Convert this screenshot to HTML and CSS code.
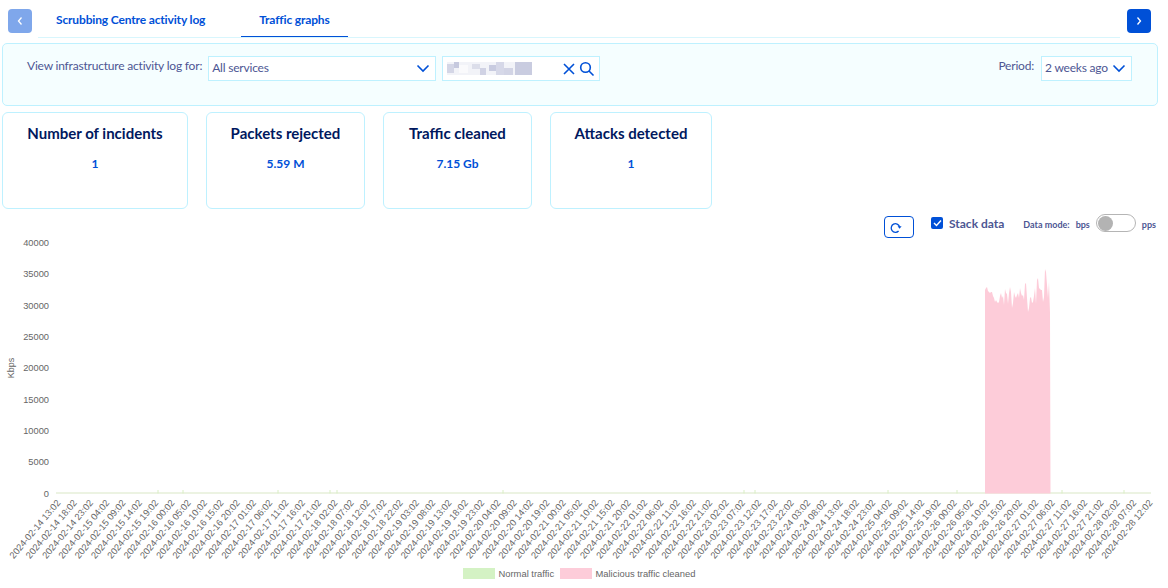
FILE: index.html
```html
<!DOCTYPE html>
<html lang="en">
<head>
  <meta charset="UTF-8">
  <title>Traffic graphs</title>
  <link rel="stylesheet" href="styles.css">
</head>
<body>
  <div class="tabs">
    <button class="nav-btn disabled">
      <svg width="8" height="10" viewBox="0 0 8 10"><path d="M5.5 1.5 2.5 5l3 3.5"/></svg>
    </button>
    <div class="tab-list">
      <a class="tab">Scrubbing Centre activity log</a>
      <a class="tab active">Traffic graphs</a>
    </div>
    <button class="nav-btn">
      <svg width="8" height="10" viewBox="0 0 8 10"><path d="M2.5 1.5 5.5 5l-3 3.5"/></svg>
    </button>
  </div>

  <div class="filters">
    <label class="filter-label">View infrastructure activity log for:</label>
    <div class="select select-service">
      <span>All services</span>
      <svg class="chevron" width="14" height="9" viewBox="0 0 14 9"><path d="M1.5 1.5 7 7l5.5-5.5"/></svg>
    </div>
    <div class="search">
      <svg class="blur" width="85" height="13" viewBox="0 0 85 13" shape-rendering="crispEdges">
        <rect x="0" y="0" width="85" height="13" fill="#f2f3f8"/>
        <rect x="0" y="2" width="7" height="9" fill="#d4d6e6"/>
        <rect x="7" y="0" width="5" height="6" fill="#c6c9de"/>
        <rect x="12" y="3" width="9" height="8" fill="#fafafc"/>
        <rect x="25" y="2" width="8" height="5" fill="#dcdeea"/>
        <rect x="33" y="6" width="6" height="7" fill="#d0d2e4"/>
        <rect x="42" y="3" width="7" height="6" fill="#c8cbe0"/>
        <rect x="49" y="0" width="8" height="13" fill="#d6d8e8"/>
        <rect x="57" y="6" width="9" height="7" fill="#d2d4e5"/>
        <rect x="68" y="0" width="17" height="13" fill="#c9cce0"/>
      </svg>
      <svg class="clear" width="14" height="14" viewBox="0 0 14 14"><path d="M2 2l10 10M12 2 2 12"/></svg>
      <svg class="magnifier" width="16" height="16" viewBox="0 0 16 16"><circle cx="6.5" cy="6.5" r="4.8"/><path d="M10 10l4.5 4.5"/></svg>
    </div>
    <div class="period">
      <label class="filter-label">Period:</label>
      <div class="select select-period">
        <span>2 weeks ago</span>
        <svg class="chevron" width="14" height="9" viewBox="0 0 14 9"><path d="M1.5 1.5 7 7l5.5-5.5"/></svg>
      </div>
    </div>
  </div>

  <div class="cards">
    <div class="card card-incidents"><h3>Number of incidents</h3><p>1</p></div>
    <div class="card card-packets"><h3>Packets rejected</h3><p>5.59 M</p></div>
    <div class="card card-traffic"><h3>Traffic cleaned</h3><p>7.15 Gb</p></div>
    <div class="card card-attacks"><h3>Attacks detected</h3><p>1</p></div>
  </div>

  <div class="graph-tools">
    <button class="refresh">
      <svg width="12" height="12" viewBox="0 0 12 12"><path d="M8.6 9A4.3 4.3 0 1 1 9.6 4.7"/><path class="fill" d="M7.6 4.2h4L9.6 6.8z"/></svg>
    </button>
    <span class="checkbox">
      <svg width="9" height="8" viewBox="0 0 9 8"><path d="M1 4l2.5 2.5L8 1.5"/></svg>
    </span>
    <span class="stack-label">Stack data</span>
    <span class="mode-label">Data mode:</span>
    <span class="mode-unit">bps</span>
    <span class="toggle"><span class="knob"></span></span>
    <span class="mode-unit">pps</span>
  </div>

  <svg id="graph" class="graph" width="1168" height="350" viewBox="0 238 1168 350"></svg>

  <script src="graph.js"></script>
</body>
</html>
```

FILE: styles.css
```css
body {
  margin: 0;
  width: 1168px;
  height: 588px;
  overflow: hidden;
  background-color: #fff;
  font-family: Lato, "Noto Sans", Arial, sans-serif;
  letter-spacing: -0.2px;
  color: #4d5693;
}
button {
  font-family: inherit;
  padding: 0;
  cursor: pointer;
}

/* tabs */
.tabs {
  display: flex;
  align-items: flex-start;
  height: 43px;
  padding: 9px 17px 0 8px;
  box-sizing: border-box;
}
.nav-btn {
  flex: none;
  width: 24px;
  height: 24px;
  border: none;
  border-radius: 4px;
  background-color: #0050d7;
  display: flex;
  align-items: center;
  justify-content: center;
}
.nav-btn svg path {
  fill: none;
  stroke: #fff;
  stroke-width: 1.3;
}
.nav-btn.disabled {
  background-color: #7fa7eb;
}
.tab-list {
  flex: 1;
  display: flex;
  height: 28px;
  margin: 0 7px 0 6px;
  border-bottom: 1px solid #d8f6fd;
}
.tab {
  height: 27px;
  padding: 0 18px;
  font-size: 12px;
  font-weight: 700;
  line-height: 22px;
  letter-spacing: -0.15px;
  color: #0050d7;
  white-space: nowrap;
}
.tab + .tab {
  margin-left: 18px;
}
.tab.active {
  border-bottom: 1px solid #0050d7;
}

/* filters */
.filters {
  display: flex;
  align-items: flex-start;
  height: 63px;
  margin: 0 10px 0 2px;
  padding: 12px 24px 0 24px;
  box-sizing: border-box;
  background-color: #f5feff;
  border: 1px solid #bef1ff;
  border-radius: 5px;
}
.filter-label {
  padding-top: 1px;
  font-size: 12px;
  line-height: 18px;
  white-space: nowrap;
}
.select {
  display: flex;
  align-items: center;
  justify-content: space-between;
  box-sizing: border-box;
  height: 25px;
  padding: 0 5px 0 3px;
  background-color: #fff;
  border: 1px solid #bef1ff;
  font-size: 12px;
  white-space: nowrap;
}
.select span {
  margin-top: -2px;
}
.select-service {
  width: 228px;
  margin-left: 6px;
}
.select-period {
  width: 91px;
  margin-left: 7px;
}
.chevron path {
  fill: none;
  stroke: #0050d7;
  stroke-width: 1.6;
}
.search {
  display: flex;
  align-items: center;
  box-sizing: border-box;
  width: 158px;
  height: 25px;
  margin-left: 6px;
  padding: 0 4px;
  background-color: #fff;
  border: 1px solid #bef1ff;
}
.blur {
  margin-right: auto;
}
.clear path {
  fill: none;
  stroke: #0050d7;
  stroke-width: 1.6;
}
.magnifier {
  margin-left: 3px;
}
.magnifier circle,
.magnifier path {
  fill: none;
  stroke: #0050d7;
  stroke-width: 1.6;
}
.period {
  display: flex;
  margin-left: auto;
  padding-right: 1px;
}

/* cards */
.cards {
  display: flex;
  gap: 18px;
  margin: 6px 0 0 2px;
}
.card {
  box-sizing: border-box;
  height: 97px;
  border: 1px solid #bef1ff;
  border-radius: 6px;
  text-align: center;
}
.card-incidents { width: 186px; }
.card-packets { width: 159px; }
.card-traffic { width: 149px; }
.card-attacks { width: 162px; }
.card h3 {
  margin: 10px 0 0;
  font-size: 15px;
  font-weight: 700;
  line-height: 20px;
  letter-spacing: 0;
  color: #00185e;
}
.card p {
  margin: 12px 0 0;
  font-size: 12px;
  font-weight: 700;
  line-height: 18px;
  letter-spacing: 0;
  color: #0050d7;
}

/* graph tools */
.graph-tools {
  display: flex;
  align-items: center;
  height: 22px;
  margin-top: 7px;
  padding-left: 884px;
}
.refresh {
  width: 30px;
  height: 22px;
  background-color: #fff;
  border: 1px solid #0050d7;
  border-radius: 4px;
  display: flex;
  align-items: center;
  justify-content: center;
}
.refresh svg {
  margin: 2px 7px 0 0;
}
.refresh path {
  fill: none;
  stroke: #0050d7;
  stroke-width: 1.3;
}
.refresh path.fill {
  fill: #0050d7;
  stroke: none;
}
.checkbox {
  width: 12px;
  height: 12px;
  margin: -8px 0 0 17px;
  border-radius: 2px;
  background-color: #0050d7;
  display: flex;
  align-items: center;
  justify-content: center;
}
.checkbox path {
  fill: none;
  stroke: #fff;
  stroke-width: 1.4;
}
.stack-label {
  margin: -8px 0 0 6px;
  font-size: 12px;
  font-weight: 700;
  letter-spacing: 0;
}
.mode-label {
  margin: -6px 0 0 19px;
  font-size: 9px;
  font-weight: 700;
  letter-spacing: 0;
}
.mode-unit {
  margin: -6px 0 0 6px;
  font-size: 9px;
  font-weight: 700;
  letter-spacing: 0;
}
.toggle {
  width: 38px;
  height: 16px;
  margin: -8px 0 0 6px;
  border: 1px solid #b5b5b5;
  border-radius: 9px;
  background-color: #fff;
  display: flex;
  align-items: center;
}
.knob {
  width: 15px;
  height: 15px;
  margin-left: 1px;
  border-radius: 50%;
  background-color: #b3b3b3;
}

/* graph */
.graph {
  display: block;
}
.graph text {
  font-family: "Liberation Sans", Arial, sans-serif;
  font-size: 9.3px;
  letter-spacing: 0;
  fill: #666;
}
.graph .y-label {
  font-size: 9px;
}
.graph .legend-label {
  font-size: 9.4px;
}
.normal-line {
  fill: none;
  stroke: #e6efd8;
  stroke-width: 1.5;
}
.normal-spike {
  stroke: #d9eec4;
  stroke-width: 1;
}
.cleaned-area {
  fill: #fdccd9;
}
.swatch-normal {
  fill: #d4f2c4;
}
.swatch-cleaned {
  fill: #fdccd9;
}
```

FILE: graph.js
```js
const SVG_NS = 'http://www.w3.org/2000/svg';
const graph = document.querySelector('#graph');

const X_LEFT = 56;
const X_RIGHT = 1151;
const Y_ZERO = 493.5;
const Y_TOP = 243;
const TICK_COUNT = 67;

function addNode(tag, attrs, text) {
  const node = document.createElementNS(SVG_NS, tag);
  Object.keys(attrs).forEach((key) => node.setAttribute(key, attrs[key]));
  if (text) node.textContent = text;
  graph.appendChild(node);
  return node;
}

// y axis
for (let value = 0; value <= 40000; value += 5000) {
  const y = Y_ZERO - (value / 40000) * (Y_ZERO - Y_TOP);
  addNode('text', { x: 49, y: y + 3, 'text-anchor': 'end' }, String(value));
}
addNode('text', { class: 'y-label', transform: 'translate(14 368) rotate(-90)', 'text-anchor': 'middle' }, 'Kbps');

// x axis: one label every 5 hours
function pad(n) {
  return String(n).padStart(2, '0');
}
const start = Date.UTC(2024, 1, 14, 13, 2);
for (let i = 0; i <= TICK_COUNT; i++) {
  const d = new Date(start + i * 5 * 3600 * 1000);
  const label = `2024-02-${pad(d.getUTCDate())} ${pad(d.getUTCHours())}:02`;
  const x = 61 + i * ((1153 - 61) / TICK_COUNT);
  addNode('text', { transform: `translate(${x} 503) rotate(-50)`, 'text-anchor': 'end' }, label);
}

// normal traffic, barely above zero
addNode('line', { class: 'normal-line', x1: X_LEFT, y1: Y_ZERO - 0.5, x2: X_RIGHT, y2: Y_ZERO - 0.5 });
[158, 183, 278, 330, 337, 503, 744, 755, 888, 957, 1062, 1124].forEach((x) => {
  addNode('line', { class: 'normal-spike', x1: x, y1: Y_ZERO - 3.5, x2: x, y2: Y_ZERO });
});

// malicious traffic cleaned: [x, y] of the top edge
const cleaned = [
  [985, 290], [986, 288], [987, 287], [988, 291], [989, 292], [990, 293], [991, 292], [992, 292],
  [993, 296], [994, 298], [995, 302], [996, 300], [997, 302], [998, 303], [999, 302], [1000, 296],
  [1001, 293], [1002, 298], [1003, 296], [1004, 305], [1005, 289], [1006, 293], [1007, 294], [1008, 304],
  [1009, 293], [1010, 287], [1011, 292], [1012, 308], [1013, 303], [1014, 292], [1015, 296], [1016, 298],
  [1017, 295], [1018, 293], [1019, 298], [1020, 288], [1021, 293], [1022, 296], [1023, 295], [1024, 300],
  [1025, 284], [1026, 283], [1027, 298], [1028, 312], [1029, 308], [1030, 298], [1031, 297], [1032, 303],
  [1033, 302], [1034, 296], [1035, 288], [1036, 304], [1037, 280], [1038, 278], [1039, 288], [1040, 289],
  [1041, 290], [1042, 290], [1043, 302], [1044, 297], [1045, 269], [1046, 272], [1047, 285], [1048, 298],
  [1049, 282], [1050, 313]
];
const points = cleaned.map((p) => p.join(',')).join(' ');
addNode('polygon', { class: 'cleaned-area', points: `985,${Y_ZERO} ${points} 1050.5,${Y_ZERO}` });

// legend
addNode('rect', { class: 'swatch-normal', x: 463, y: 568, width: 32, height: 11 });
addNode('text', { class: 'legend-label', x: 498.5, y: 576.5 }, 'Normal traffic');
addNode('rect', { class: 'swatch-cleaned', x: 560, y: 568, width: 32, height: 11 });
addNode('text', { class: 'legend-label', x: 595.5, y: 576.5 }, 'Malicious traffic cleaned');
```
